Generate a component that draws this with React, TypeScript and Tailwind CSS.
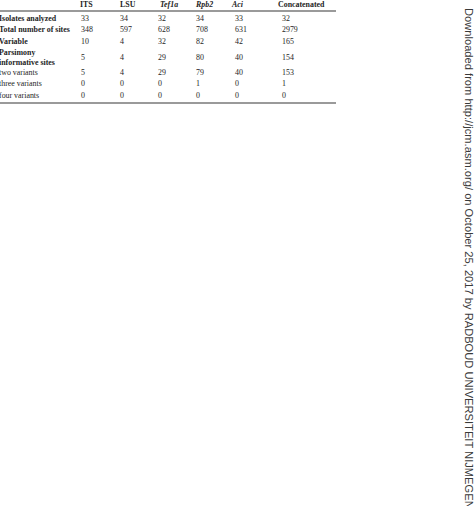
import React from "react";

const cols = ["w-[81px]", "w-[39px]", "w-[38px]", "w-[38px]", "w-[39px]", "w-[47px]", "w-[54px]"];

type Row = { label: React.ReactNode; bold?: boolean; h: string; vals: string[] };

const rows: Row[] = [
  { label: "Isolates analyzed", bold: true, h: "h-[11px]", vals: ["33", "34", "32", "34", "33", "32"] },
  { label: "Total number of sites", bold: true, h: "h-[12px]", vals: ["348", "597", "628", "708", "631", "2979"] },
  { label: "Variable", bold: true, h: "h-[12px]", vals: ["10", "4", "32", "82", "42", "165"] },
  {
    label: (
      <>
        Parsimony
        <br />
        informative sites
      </>
    ),
    bold: true,
    h: "h-[19px]",
    vals: ["5", "4", "29", "80", "40", "154"],
  },
  { label: "two variants", h: "h-[11px]", vals: ["5", "4", "29", "79", "40", "153"] },
  { label: "three variants", h: "h-[12px]", vals: ["0", "0", "0", "1", "0", "1"] },
  { label: "four variants", h: "h-[12px]", vals: ["0", "0", "0", "0", "0", "0"] },
];

export default function App() {
  return (
    <div className="w-[474px] h-[506px] bg-white flex overflow-hidden">
      <div
        className="w-[336px] flex flex-col text-[7.9px] text-[#1e1e1e]"
        style={{ fontFamily: '"Liberation Serif", "Times New Roman", serif' }}
      >
        <div className="flex items-end h-[10px] font-bold leading-none pb-[1px]">
          <div className={cols[0]}></div>
          <div className={cols[1]}><span className="-ml-[1px]">ITS</span></div>
          <div className={cols[2]}>LSU</div>
          <div className={`${cols[3]} italic pl-[2px]`}>Tef1a</div>
          <div className={`${cols[4]} italic`}>Rpb2</div>
          <div className={`${cols[5]} italic -ml-[3px]`}>Aci</div>
          <div className={cols[6]}><span className="-ml-[1px]">Concatenated</span></div>
        </div>
        <div className="h-[2px] bg-[#9a9a9a]"></div>
        <div className="h-[1px]"></div>
        {rows.map((r, i) => (
          <div key={i} className={`flex items-center ${r.h}`}>
            <div className={`${cols[0]} -ml-[1px] ${r.bold ? "font-bold" : ""} leading-[9.5px] whitespace-nowrap`}>
              {r.label}
            </div>
            {r.vals.map((v, j) => (
              <div key={j} className={`${cols[j + 1]} leading-none ${j === 0 ? "ml-[1px]" : ""}`}>
                {v}
              </div>
            ))}
          </div>
        ))}
        <div className="h-[2px] bg-[#9a9a9a]"></div>
      </div>
      <div className="flex-1 flex justify-end">
        <div
          className="w-[12px] -mr-[1px] pt-[8px] text-[11.15px] leading-[12px] text-[#3a3a3a] whitespace-nowrap [writing-mode:vertical-rl]"
          style={{ fontFamily: '"Liberation Sans", Arial, sans-serif' }}
        >
          Downloaded from http://jcm.asm.org/ on October 25, 2017 by RADBOUD UNIVERSITEIT NIJMEGEN
        </div>
      </div>
    </div>
  );
}
